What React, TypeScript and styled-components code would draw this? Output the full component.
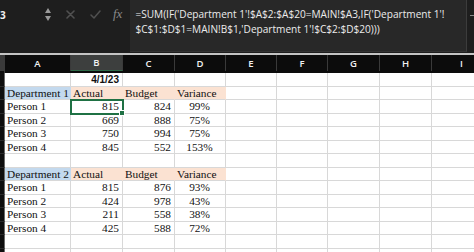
import React from "react";
import styled, { createGlobalStyle } from "styled-components";

const GlobalStyle = createGlobalStyle`
  html, body { margin: 0; padding: 0; background: #ffffff; overflow: hidden; }
  body { width: 474px; height: 252px; }
`;

const Page = styled.div`
  width: 474px;
  height: 252px;
  overflow: hidden;
  display: flex;
  flex-direction: column;
  background: #ffffff;
`;

const Toolbar = styled.div`
  height: 53px;
  flex: none;
  background: #1e1e1e;
  display: flex;
  align-items: stretch;
`;

const NameBox = styled.div`
  width: 6px;
  padding-top: 8px;
  font: 700 10px "Open Sans", sans-serif;
  color: #f0f0f0;
  white-space: nowrap;
`;

const Stepper = styled.div`
  margin-left: 39px;
  width: 6px;
  padding-top: 8px;
  display: flex;
  flex-direction: column;
  gap: 3px;
  align-items: center;
`;

const Tri = styled.div<{ $down?: boolean }>`
  width: 0;
  height: 0;
  border-left: 3px solid transparent;
  border-right: 3px solid transparent;
  ${(p) => (p.$down ? "border-top: 5px solid #9a9a9a;" : "border-bottom: 5px solid #9a9a9a;")}
`;

const IconSlot = styled.div<{ $ml: number }>`
  margin-left: ${(p) => p.$ml}px;
  padding-top: 10px;
  height: 10px;
  display: flex;
  align-items: flex-start;
`;

const Fx = styled.div`
  margin-left: 12px;
  padding-top: 6px;
  font: italic 13px "Liberation Serif", serif;
  color: #8a8a8a;
`;

const FormulaBox = styled.div`
  margin-left: 8px;
  width: 337px;
  height: 52px;
  box-sizing: border-box;
  background: #282828;
  border-right: 1px solid #3c3c3c;
  border-bottom: 1px solid #333;
  padding: 7px 0 0 5px;
  font: 400 10.1px "Open Sans", sans-serif;
  line-height: 15px;
  color: #ececec;
  white-space: nowrap;
  overflow: hidden;
`;

const Collapse = styled.div`
  margin-left: 3px;
  padding-top: 14px;
  width: 4px;
  height: 1px;
  border-bottom: 1px solid #8a8a8a;
`;

const Separator = styled.div`
  height: 2px;
  flex: none;
  background: #c4c4c4;
`;

const COLS = "5px 66px 52px 52px 51px 51px 51px 52px 52px 60px";

const HeaderRow = styled.div`
  display: grid;
  grid-template-columns: ${COLS};
  height: 18px;
  flex: none;
  background: #0c0c0c;
`;

const ColHead = styled.div<{ $active?: boolean; $corner?: boolean }>`
  box-sizing: border-box;
  display: flex;
  align-items: center;
  justify-content: center;
  font: 600 9.5px "Open Sans", sans-serif;
  color: #f2f2f2;
  border-right: 1px solid #3a3a3a;
  background: ${(p) => (p.$active ? "#3d3f3e" : p.$corner ? "#3a3a3a" : "#0c0c0c")};
  ${(p) => (p.$active ? "border-bottom: 1px solid #2e6b48;" : "")}
`;

const Sheet = styled.div`
  display: grid;
  grid-template-columns: ${COLS};
  grid-auto-rows: 13.5px;
  flex: none;
`;

type Fill = "blue" | "peach" | undefined;

const Cell = styled.div<{
  $align?: "left" | "right" | "center";
  $fill?: Fill;
  $bold?: boolean;
  $selected?: boolean;
}>`
  position: relative;
  box-sizing: border-box;
  border-right: 1px solid ${(p) => (p.$fill === "peach" ? "#fbe2d2" : p.$fill === "blue" ? "#c3d9ee" : "#d8d8d8")};
  border-bottom: 1px solid #d8d8d8;
  background: ${(p) => (p.$fill === "peach" ? "#fbe2d2" : p.$fill === "blue" ? "#c3d9ee" : "#ffffff")};
  display: flex;
  align-items: center;
  justify-content: ${(p) => (p.$align === "right" ? "flex-end" : p.$align === "center" ? "center" : "flex-start")};
  padding: 0 3px 0 2px;
  font: ${(p) => (p.$bold ? '700 10px "Liberation Sans", sans-serif' : '400 11.3px "Liberation Serif", serif')};
  color: #111;
  white-space: nowrap;
  ${(p) =>
    p.$selected
      ? "outline: 2px solid #1f7144; outline-offset: -1px; z-index: 1;"
      : ""}
`;

const Handle = styled.div`
  position: absolute;
  right: -3px;
  bottom: -3px;
  width: 4px;
  height: 4px;
  background: #1f7144;
  border: 1px solid #fff;
`;

const RowHead = styled.div`
  background: #0e0e0e;
  border-bottom: 1px solid #2a2a2a;
  border-right: 1px solid #6a6a6a;
  box-sizing: border-box;
`;

type CellData = { t?: string; a?: "left" | "right" | "center"; f?: Fill; b?: boolean; sel?: boolean };

const person = (name: string, act: string, bud: string, v: string, sel = false): CellData[] => [
  { t: name },
  { t: act, a: "right", sel },
  { t: bud, a: "right" },
  { t: v, a: "center" },
];

const dept = (name: string): CellData[] => [
  { t: name, f: "blue" },
  { t: "Actual", f: "peach" },
  { t: "Budget", f: "peach" },
  { t: "Variance", f: "peach" },
];

const rows: CellData[][] = [
  [{}, { t: "4/1/23", a: "right", b: true }, {}, {}],
  dept("Department 1"),
  person("Person 1", "815", "824", "99%", true),
  person("Person 2", "669", "888", "75%"),
  person("Person 3", "750", "994", "75%"),
  person("Person 4", "845", "552", "153%"),
  [{}, {}, {}, {}],
  dept("Department 2"),
  person("Person 1", "815", "876", "93%"),
  person("Person 2", "424", "978", "43%"),
  person("Person 3", "211", "558", "38%"),
  person("Person 4", "425", "588", "72%"),
  [{}, {}, {}, {}],
  [{}, {}, {}, {}],
];

const letters = ["A", "B", "C", "D", "E", "F", "G", "H", "I", ""];

export default function App() {
  return (
    <Page>
      <GlobalStyle />
      <Toolbar>
        <NameBox>3</NameBox>
        <Stepper>
          <Tri />
          <Tri $down />
        </Stepper>
        <IconSlot $ml={15}>
          <svg width="9" height="9" viewBox="0 0 9 9">
            <path d="M1 1 L8 8 M8 1 L1 8" stroke="#505050" strokeWidth="1.6" strokeLinecap="round" />
          </svg>
        </IconSlot>
        <IconSlot $ml={15}>
          <svg width="11" height="9" viewBox="0 0 11 9">
            <path d="M1 5 L4 8 L10 1" stroke="#505050" strokeWidth="1.5" fill="none" strokeLinecap="round" strokeLinejoin="round" />
          </svg>
        </IconSlot>
        <Fx>fx</Fx>
        <FormulaBox>
          <div>=SUM(IF('Department 1'!$A$2:$A$20=MAIN!$A3,IF('Department 1'!</div>
          <div>$C$1:$D$1=MAIN!B$1,'Department 1'!$C$2:$D$20)))</div>
        </FormulaBox>
        <Collapse />
      </Toolbar>
      <Separator />
      <HeaderRow>
        <ColHead $corner />
        {letters.map((l, i) => (
          <ColHead key={i} $active={l === "B"}>
            {l}
          </ColHead>
        ))}
      </HeaderRow>
      <Sheet>
        {rows.map((r, ri) => (
          <React.Fragment key={ri}>
            <RowHead />
            {r.map((c, ci) => (
              <Cell key={ci} $align={c.a} $fill={c.f} $bold={c.b} $selected={c.sel}>
                {c.t}
                {c.sel && <Handle />}
              </Cell>
            ))}
            {Array.from({ length: 5 }).map((_, k) => (
              <Cell key={`e${k}`} />
            ))}
          </React.Fragment>
        ))}
      </Sheet>
    </Page>
  );
}
